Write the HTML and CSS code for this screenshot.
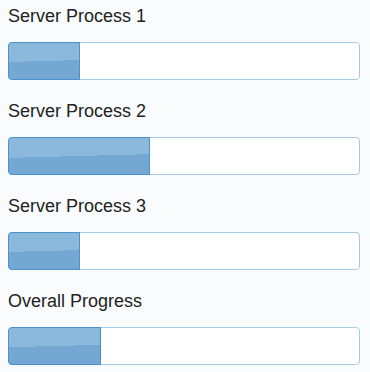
FILE: index.html
```html
<!DOCTYPE html>
<html lang="en">
<head>
    <meta charset="UTF-8">
    <title>Progress</title>
    <link rel="stylesheet" href="styles.css">
</head>
<body>
    <div class="progress-list">
        <div class="progress-item">
            <div class="progress-label">Server Process 1</div>
            <div class="progress-track"><div class="progress-fill" style="width: 20.5%"></div></div>
        </div>
        <div class="progress-item">
            <div class="progress-label">Server Process 2</div>
            <div class="progress-track"><div class="progress-fill" style="width: 40.6%"></div></div>
        </div>
        <div class="progress-item">
            <div class="progress-label">Server Process 3</div>
            <div class="progress-track"><div class="progress-fill" style="width: 20.5%"></div></div>
        </div>
        <div class="progress-item">
            <div class="progress-label">Overall Progress</div>
            <div class="progress-track"><div class="progress-fill" style="width: 26.7%"></div></div>
        </div>
    </div>
</body>
</html>
```

FILE: styles.css
```css
body {
    margin: 0;
    padding: 0;
    background-color: #f9fbfc;
    font-family: "Liberation Sans", Arial, sans-serif;
    color: #222;
}
.progress-list {
    padding: 6px 10px 0 8px;
}
.progress-item {
    margin-bottom: 21px;
}
.progress-label {
    font-size: 18px;
    line-height: 20px;
    margin-bottom: 16px;
}
.progress-track {
    height: 38px;
    box-sizing: border-box;
    background-color: #fff;
    border: 1px solid #a6cbe6;
    border-radius: 4px;
}
.progress-fill {
    height: 38px;
    box-sizing: border-box;
    margin: -1px 0 0 -1px;
    background: linear-gradient(178.5deg, #8bb9dc 50%, #74a8d2 50%);
    border: 1px solid #4b90cf;
    border-radius: 4px 0 0 4px;
}
```
